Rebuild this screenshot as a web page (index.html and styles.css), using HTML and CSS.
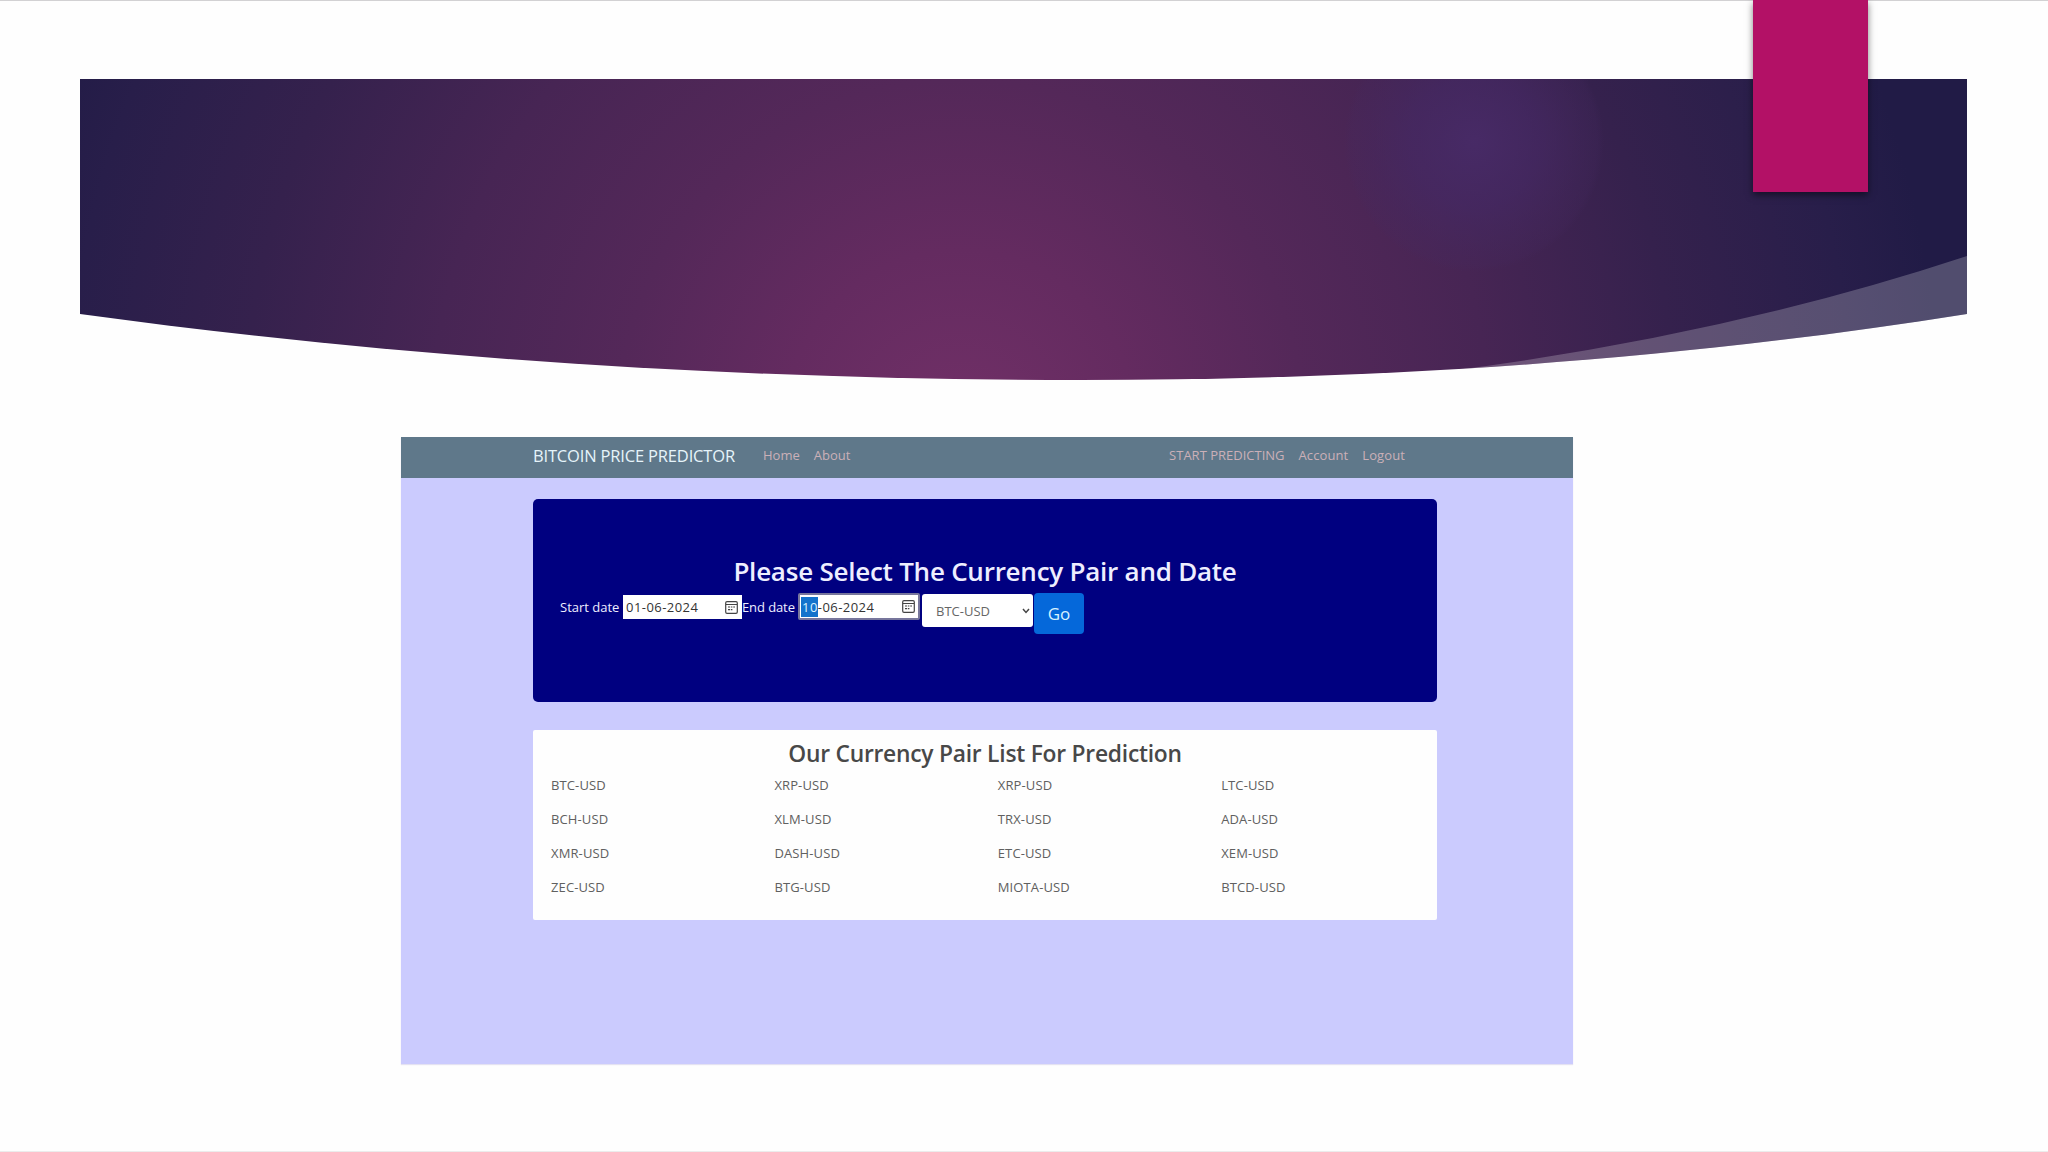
FILE: index.html
```html
<!DOCTYPE html>
<html lang="en">
<head>
  <meta charset="UTF-8" />
  <title>Bitcoin Price Predictor</title>
  <link rel="stylesheet" href="styles.css">
</head>
<body>
  <div class="slide">
    <svg class="banner" width="1887" height="302" viewBox="80 79 1887 302">
      <defs>
        <radialGradient id="glow" gradientUnits="userSpaceOnUse" cx="0" cy="0" r="1" gradientTransform="translate(960 430) scale(980 1000)">
          <stop offset="0" stop-color="#713067" />
          <stop offset="0.18" stop-color="#642b60" />
          <stop offset="0.35" stop-color="#542859" />
          <stop offset="0.54" stop-color="#472554" />
          <stop offset="0.73" stop-color="#35214d" />
          <stop offset="0.91" stop-color="#281e4a" />
          <stop offset="1" stop-color="#211b46" />
        </radialGradient>
        <radialGradient id="spot">
          <stop offset="0" stop-color="#482b68" stop-opacity="0.9" />
          <stop offset="0.5" stop-color="#452965" stop-opacity="0.65" />
          <stop offset="0.95" stop-color="#452960" stop-opacity="0.2" />
          <stop offset="1" stop-color="#452960" stop-opacity="0" />
        </radialGradient>
        <clipPath id="curve">
          <path d="M80 79H1967V314C1690 358 1400 380 1080 380C740 380 400 358 80 314Z" />
        </clipPath>
      </defs>
      <g clip-path="url(#curve)">
        <rect x="80" y="79" width="1887" height="302" fill="url(#glow)" />
        <circle cx="1474" cy="142" r="130" fill="url(#spot)" />
        <path d="M1440 372Q1722 337 1967 256V381H1440Z" fill="#fff" fill-opacity="0.22" />
      </g>
    </svg>
    <div class="ribbon"></div>

    <div class="app">
      <nav class="navbar">
        <a class="brand">BITCOIN PRICE PREDICTOR</a>
        <a class="nav-link">Home</a>
        <a class="nav-link">About</a>
        <div class="nav-right">
          <a class="nav-link start">START PREDICTING</a>
          <a class="nav-link">Account</a>
          <a class="nav-link">Logout</a>
        </div>
      </nav>

      <div class="jumbotron">
        <h2>Please Select The Currency Pair and Date</h2>
        <form class="date-form">
          <label class="label-start">Start date</label>
          <div class="date">
            <span>01-06-2024</span>
            <svg class="cal" viewBox="0 0 13 13"><path d="M2 .7H11Q12.3.7 12.3 2V11Q12.3 12.3 11 12.3H2Q.7 12.3.7 11V2Q.7.7 2 .7ZM.7 3.5H12.3M3 6H5M5.8 6H7.4M8.2 6H10M3 8.7H5M5.8 8.7H7.4" /></svg>
          </div>
          <label class="label-end">End date</label>
          <div class="date focused">
            <span><span class="selected">10</span>-06-2024</span>
            <svg class="cal" viewBox="0 0 13 13"><path d="M2 .7H11Q12.3.7 12.3 2V11Q12.3 12.3 11 12.3H2Q.7 12.3.7 11V2Q.7.7 2 .7ZM.7 3.5H12.3M3 6H5M5.8 6H7.4M8.2 6H10M3 8.7H5M5.8 8.7H7.4" /></svg>
          </div>
          <div class="select">
            <span>BTC-USD</span>
            <svg width="8" height="6" viewBox="0 0 8 6"><path d="M1 1L4 4.4L7 1" /></svg>
          </div>
          <div class="btn">Go</div>
        </form>
      </div>

      <div class="pairs">
        <h3>Our Currency Pair List For Prediction</h3>
        <div class="grid">
          <span>BTC-USD</span>
          <span>XRP-USD</span>
          <span>XRP-USD</span>
          <span>LTC-USD</span>
          <span>BCH-USD</span>
          <span>XLM-USD</span>
          <span>TRX-USD</span>
          <span>ADA-USD</span>
          <span>XMR-USD</span>
          <span>DASH-USD</span>
          <span>ETC-USD</span>
          <span>XEM-USD</span>
          <span>ZEC-USD</span>
          <span>BTG-USD</span>
          <span>MIOTA-USD</span>
          <span>BTCD-USD</span>
        </div>
      </div>
    </div>
  </div>
</body>
</html>
```
FILE: styles.css
```css
* {
  box-sizing: border-box;
}

body {
  margin: 0;
  background: #fefefe;
  font-family: "Open Sans", "Noto Sans", sans-serif;
  font-size: 13px;
  overflow: hidden;
}

.slide {
  position: relative;
  height: 1152px;
  padding: 78px 80px 0;
  border-top: 1px solid #d2d1d3;
  border-bottom: 1px solid #ececec;
}

.banner {
  display: block;
}

/* hangs over the top edge of the banner */
.ribbon {
  position: absolute;
  top: -1px;
  right: 180px;
  width: 115px;
  height: 192px;
  background: #b31166;
  box-shadow: 0 3px 7px rgba(0, 0, 0, 0.5);
}

.app {
  width: 1172px;
  height: 627px;
  margin: 56px 0 0 321px;
  background: #cbcbfe;
  box-shadow: 0 1px 1px #e4e2f2;
}

.navbar {
  display: flex;
  align-items: center;
  height: 41px;
  padding: 0 168px 5px 132px;
  background: #5f788a;
  white-space: nowrap;
}

.brand {
  width: 230px;
  color: #e6f4fa;
  font-size: 16.5px;
  letter-spacing: -0.17px;
}

.nav-link {
  margin-right: 14px;
  color: #cbb0b8;
}

.nav-right {
  display: flex;
  margin-left: auto;
}

.nav-right .nav-link {
  letter-spacing: 0.1px;
}

.nav-right .nav-link:last-child {
  margin-right: 0;
}

.nav-right .start {
  letter-spacing: 0;
}

.jumbotron {
  width: 904px;
  height: 203px;
  margin: 21px 0 0 132px;
  padding: 57px 27px 0;
  background: #000080;
  border-radius: 5px;
  color: #eef;
}

h2,
h3 {
  margin: 0;
  font-weight: 600;
  letter-spacing: -0.24px;
  text-align: center;
  white-space: nowrap;
}

h2 {
  font-size: 26px;
  line-height: 31px;
}

.date-form {
  display: flex;
  align-items: flex-start;
  margin-top: 6px;
  white-space: nowrap;
}

.date-form > * {
  flex-shrink: 0;
}

.date-form label {
  line-height: 28px;
}

.label-start {
  width: 63px;
}

.label-end {
  width: 56px;
  letter-spacing: -0.1px;
}

.date {
  display: flex;
  align-items: center;
  justify-content: space-between;
  width: 119px;
  height: 24px;
  margin-top: 2px;
  padding: 0 4px 0 3px;
  background: #fff;
  color: #333;
  letter-spacing: 0.45px;
}

.focused {
  width: 122px;
  height: 27px;
  margin-top: 0;
  border: 2px solid #77769c;
  padding: 0 3px 0 1px;
  border-radius: 2px;
}

.selected {
  display: inline-block;
  padding: 0 0 0 1px;
  background: #1473cc;
  color: #d9f2ff;
  line-height: 20px;
}

.cal {
  width: 13px;
  height: 13px;
  fill: none;
  stroke: #444;
  stroke-width: 1.2;
}

.select {
  display: flex;
  align-items: center;
  justify-content: space-between;
  width: 111px;
  height: 33px;
  margin: 1px 1px 0 2px;
  padding: 0 3px 0 14px;
  background: #fff;
  border-radius: 3px;
  color: #666;
}

.select svg {
  fill: none;
  stroke: #444;
  stroke-width: 1.5;
}

.btn {
  width: 50px;
  height: 41px;
  background: #0568da;
  border-radius: 4px;
  color: #d8f2ff;
  font-size: 17px;
  line-height: 42px;
  text-align: center;
}

.pairs {
  width: 904px;
  height: 190px;
  margin: 28px 0 0 132px;
  padding: 10px 0 0 18px;
  background: #fefefe;
  border-radius: 2px;
}

h3 {
  margin-left: -18px;
  color: #484848;
  font-size: 22.8px;
  line-height: 28px;
}

.grid {
  display: grid;
  grid-template-columns: repeat(4, 223.4px);
  grid-auto-rows: 34px;
  align-items: center;
  color: #606060;
  letter-spacing: 0.12px;
}
```
